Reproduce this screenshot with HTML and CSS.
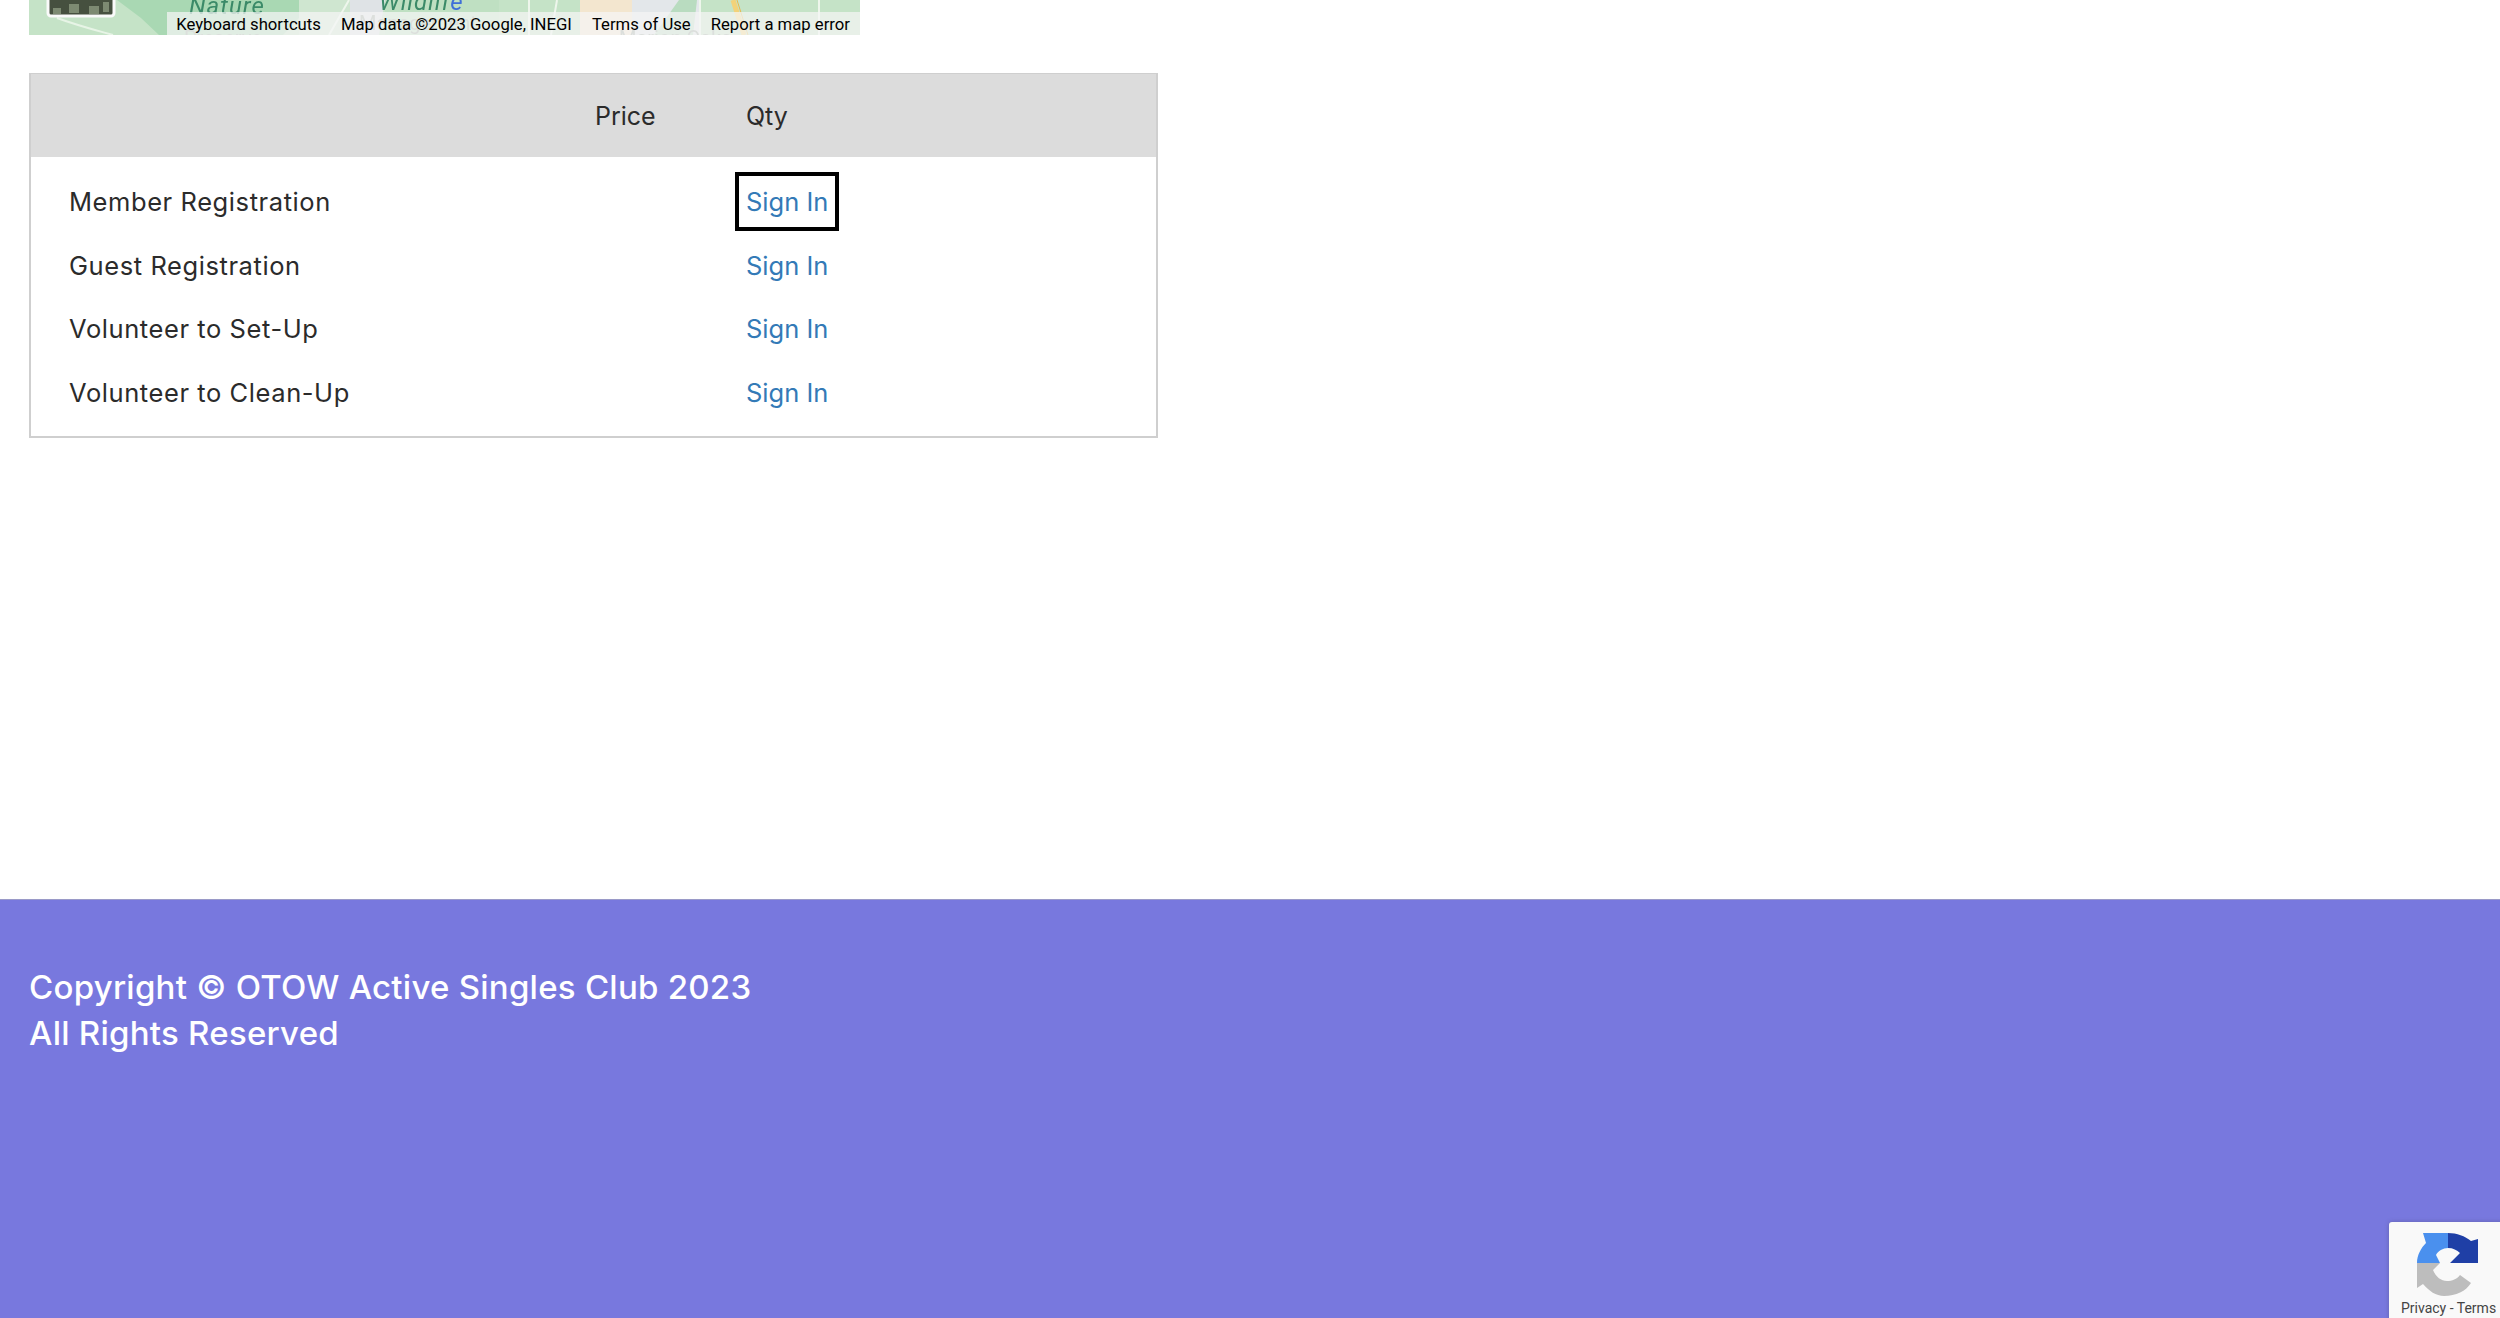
FILE: index.html
```html
<!DOCTYPE html>
<html lang="en">
<head>
<meta charset="utf-8">
<title>Event Registration</title>
<link rel="stylesheet" href="styles.css">
</head>
<body>
<main class="content">
  <div class="map">
    <svg class="map-art" width="831" height="35" viewBox="0 0 831 35" aria-hidden="true">
      <rect width="831" height="35" fill="#c5e3c7"/>
      <path d="M88 0H270V18L254 35H130L112 18Z" fill="#a9d8b3"/>
      <path d="M270 0H321V35H270Z" fill="#cfe6d0"/>
      <path d="M321 0H356L350 35H321Z" fill="#dfe3e6"/>
      <path d="M356 0H470V35H356Z" fill="#bfe0c2"/>
      <path d="M551 0H603V35H551Z" fill="#f3e6cf"/>
      <path d="M603 0H671V35H603Z" fill="#e3e7ea"/>
      <path d="M625 35L650 0H668L664 35Z" fill="#b9dcc0"/>
      <path d="M28 18C50 26 66 30 84 35" stroke="#e7f4e6" stroke-width="2" fill="none"/>
      <path d="M320 0L300 35M500 0V35M528 0L522 35M790 0V35M671 0V35" stroke="#eef6ec" stroke-width="2" fill="none"/>
      <path d="M704 0L715 35" stroke="#f2d27a" stroke-width="5" fill="none"/>
      <path d="M708 0L719 35" stroke="#e9b84c" stroke-width="1" fill="none"/>
      <rect x="19" y="-10" width="66" height="26" rx="3" fill="#46503f" stroke="#fafafa" stroke-width="3"/>
      <path d="M24 8H32V14H24ZM40 4H50V13H40ZM60 6H70V14H60ZM74 2H80V12H74Z" fill="#7d8a72"/>
      <text class="map-label map-label-park" x="160" y="14">Nature</text>
      <text class="map-label map-label-park" x="350" y="10">Wildlif<tspan class="map-label-blue">e</tspan></text>
      <text class="map-label map-label-faint" x="330" y="30">Management</text>
      <text class="map-label map-label-faint" x="155" y="45">Preserve</text>
      <text class="map-label map-label-faint" x="590" y="45">Marion Oaks</text>
    </svg>
    <ul class="attribution">
      <li class="attr-item">Keyboard shortcuts</li>
      <li class="attr-item">Map data ©2023 Google, INEGI</li>
      <li class="attr-item">Terms of Use</li>
      <li class="attr-item">Report a map error</li>
    </ul>
  </div>

  <section class="tickets">
    <div class="ticket-head">
      <span></span>
      <span>Price</span>
      <span>Qty</span>
    </div>
    <div class="ticket-body">
      <div class="ticket-row">
        <span class="ticket-name">Member Registration</span><span></span>
        <a class="sign-in is-focused" href="#">Sign In</a>
      </div>
      <div class="ticket-row">
        <span class="ticket-name">Guest Registration</span><span></span>
        <a class="sign-in" href="#">Sign In</a>
      </div>
      <div class="ticket-row">
        <span class="ticket-name">Volunteer to Set-Up</span><span></span>
        <a class="sign-in" href="#">Sign In</a>
      </div>
      <div class="ticket-row">
        <span class="ticket-name">Volunteer to Clean-Up</span><span></span>
        <a class="sign-in" href="#">Sign In</a>
      </div>
    </div>
  </section>
</main>

<footer class="site-footer">
  <p class="copyright">Copyright © OTOW Active Singles Club 2023<br>All Rights Reserved</p>
</footer>

<aside class="recaptcha">
  <svg class="recaptcha-logo" width="62" height="63" viewBox="0 0 62 63" aria-hidden="true">
    <path d="M31 0V15C26 15 21 18 19 22L23 30H14H0C0 22 4 15 9 10L6 0Z" fill="#4a90ee"/>
    <path d="M31 0C40 0 48 3 54 8L61 6V30H33L43 20C40 17 36 15 31 15Z" fill="#1f3fa6"/>
    <path d="M0 30H23L16 37C19 44 24 48 30 48C35 48 40 46 43 42L54 50C49 58 39 63 27 63C19 63 12 58 6 51L0 55Z" fill="#bdbdbd"/>
  </svg>
  <p class="recaptcha-links">Privacy - Terms</p>
</aside>
</body>
</html>
```
FILE: styles.css
```css
* {
  box-sizing: border-box;
}

html,
body {
  margin: 0;
  padding: 0;
}

body {
  display: flex;
  flex-direction: column;
  position: relative;
  height: 1318px;
  overflow: hidden;
  background: #fff;
  color: #2b2b2b;
  font-family: Inter, "Open Sans", "Liberation Sans", sans-serif;
}

.content {
  flex: 0 0 899px;
  padding: 0 29px;
}

.map {
  position: relative;
  width: 831px;
  height: 35px;
  margin-bottom: 38px;
  overflow: hidden;
}

.map-art {
  display: block;
  filter: blur(0.5px);
}

.map-label {
  font-family: Roboto, sans-serif;
  font-size: 24px;
}

.map-label-park {
  fill: #3b8a68;
  font-style: italic;
  letter-spacing: 1px;
}

.map-label-blue {
  fill: #3f6fd8;
}

.map-label-faint {
  fill: #9aa59c;
  font-size: 20px;
}

.attribution {
  position: absolute;
  top: 12px;
  right: 0;
  display: flex;
  gap: 20px;
  width: 693px;
  height: 23px;
  margin: 0;
  padding: 0 10px;
  justify-content: flex-end;
  list-style: none;
  background: rgba(245, 245, 245, 0.72);
  color: #000;
  font-family: Roboto, sans-serif;
  font-size: 16.7px;
  line-height: 25px;
  white-space: nowrap;
}

.tickets {
  width: 1129px;
  height: 365px;
  border: 2px solid #cfcfcf;
  border-top-width: 1px;
}

.ticket-head,
.ticket-row {
  display: grid;
  grid-template-columns: 526px 151px 1fr;
  padding-left: 38px;
  align-items: center;
}

.ticket-head {
  height: 83px;
  background: #dcdcdc;
  font-size: 25px;
}

.ticket-body {
  padding-top: 13px;
}

.ticket-row {
  height: 63.5px;
  font-size: 25.5px;
}

.ticket-name {
  letter-spacing: 0.58px;
}

.sign-in {
  justify-self: start;
  margin-left: -11px;
  padding: 7px;
  border: 4px solid transparent;
  color: #337ab7;
  text-decoration: none;
  line-height: 37px;
}

.sign-in.is-focused {
  border-color: #000;
}

.site-footer {
  flex: 1;
  padding-top: 64px;
  background: #7878de;
  border-top: 1px solid #9a9ac8;
  color: #fff;
}

.copyright {
  margin: 0 0 0 29px;
  font-size: 33px;
  font-weight: 500;
  line-height: 46px;
  letter-spacing: 0.25px;
}

.recaptcha {
  position: absolute;
  top: 1222px;
  left: 2389px;
  width: 130px;
  height: 110px;
  padding: 11px 0 0 28px;
  background: #f9f9f9;
  border-radius: 3px;
  box-shadow: 0 0 4px rgba(60, 60, 90, 0.35);
}

.recaptcha-logo {
  display: block;
}

.recaptcha-links {
  margin: 4px 0 0 -16px;
  font-family: Roboto, sans-serif;
  font-size: 14px;
  line-height: 16px;
  color: #444;
  white-space: nowrap;
}
```
